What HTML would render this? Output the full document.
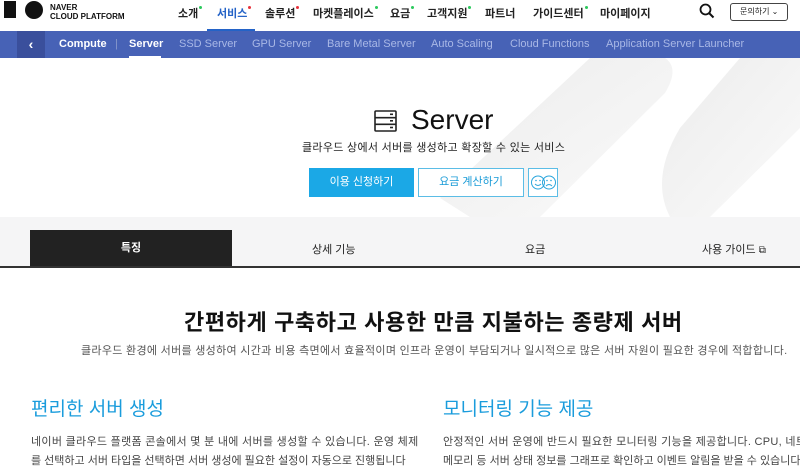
<!DOCTYPE html>
<html><head><meta charset="utf-8"><style>
*{margin:0;padding:0;box-sizing:border-box}
body{width:800px;height:456px;overflow:hidden;background:#fff;font-family:"Liberation Sans","Noto Sans CJK KR",sans-serif;position:relative;color:#222}
.a{position:absolute;white-space:nowrap}
.nav{font-size:11px;font-weight:bold;color:#222;top:5px}
.dot{display:inline-block;width:3px;height:3px;border-radius:50%;background:#2bc95c;vertical-align:top;margin-left:1px;margin-top:1px}
.r{background:#e8313b}
.sub{font-size:11px;color:#a9b8e6;top:38px}
</style></head><body>
<svg class="a" style="left:0;top:58px" width="800" height="159">
<defs><linearGradient id="g" x1="0" y1="0" x2="1" y2="1"><stop offset="0" stop-color="#ececec"/><stop offset="1" stop-color="#fafafa"/></linearGradient></defs>
<path d="M590 0 L665 0 Q680 10 665 35 L540 159 L470 159 L440 140 Z" fill="url(#g)"/>
<path d="M740 0 L800 0 L800 70 L710 159 L670 159 Q650 120 680 70 Z" fill="url(#g)"/>
</svg>
<div class="a" style="left:4px;top:1px;width:12px;height:17px;background:#111"></div>
<div class="a" style="left:25px;top:1px;width:18px;height:18px;border-radius:50%;background:#111"></div>
<div class="a" style="left:50px;top:3px;font-size:8px;font-weight:bold;line-height:9px;color:#111">NAVER<br>CLOUD PLATFORM</div>
<div class="a nav" style="left:178px">소개<span class="dot"></span></div>
<div class="a nav" style="left:217px;color:#2463c7">서비스<span class="dot r"></span></div>
<div class="a nav" style="left:265px">솔루션<span class="dot r"></span></div>
<div class="a nav" style="left:313px">마켓플레이스<span class="dot"></span></div>
<div class="a nav" style="left:390px">요금<span class="dot"></span></div>
<div class="a nav" style="left:427px">고객지원<span class="dot"></span></div>
<div class="a nav" style="left:485px">파트너</div>
<div class="a nav" style="left:533px">가이드센터<span class="dot"></span></div>
<div class="a nav" style="left:600px">마이페이지</div>
<svg class="a" style="left:699px;top:3px" width="16" height="16"><circle cx="6.5" cy="6.5" r="5" fill="none" stroke="#111" stroke-width="1.8"/><line x1="10" y1="10" x2="14.5" y2="14.5" stroke="#111" stroke-width="2"/></svg>
<div class="a" style="left:730px;top:3px;width:58px;height:18px;border:1px solid #444;border-radius:3px;font-size:8px;line-height:16px;padding-left:9px">문의하기 &#8964;</div>
<div class="a" style="left:207px;top:29px;width:48px;height:2px;background:#2463c7"></div>
<div class="a" style="left:0;top:31px;width:800px;height:27px;background:#4762b6"></div>
<div class="a" style="left:17px;top:31px;width:28px;height:27px;background:#3a4f9c;color:#fff;font-size:14px;font-weight:bold;text-align:center;line-height:27px">&#8249;</div>
<div class="a sub" style="left:59px;color:#fff;font-weight:bold">Compute</div>
<div class="a sub" style="left:115px;color:#8899cc">|</div>
<div class="a sub" style="left:129px;color:#fff;font-weight:bold">Server</div>
<div class="a" style="left:129px;top:56px;width:32px;height:2px;background:#fff"></div>
<div class="a sub" style="left:179px">SSD Server</div>
<div class="a sub" style="left:252px">GPU Server</div>
<div class="a sub" style="left:327px">Bare Metal Server</div>
<div class="a sub" style="left:431px">Auto Scaling</div>
<div class="a sub" style="left:510px">Cloud Functions</div>
<div class="a sub" style="left:606px">Application Server Launcher</div>
<svg class="a" style="left:374px;top:110px" width="23" height="22"><g fill="none" stroke="#222" stroke-width="1.6"><rect x="1" y="1" width="21" height="20" rx="1"/><line x1="1" y1="7.7" x2="22" y2="7.7"/><line x1="1" y1="14.3" x2="22" y2="14.3"/></g><g fill="#222"><rect x="16" y="3.5" width="3" height="1.6"/><rect x="16" y="10" width="3" height="1.6"/><rect x="16" y="16.7" width="3" height="1.6"/></g></svg>
<div class="a" style="left:411px;top:104px;font-size:28px;color:#111">Server</div>
<div class="a" style="left:302px;top:139px;font-size:11px;letter-spacing:.3px;color:#222">클라우드 상에서 서버를 생성하고 확장할 수 있는 서비스</div>
<div class="a" style="left:309px;top:168px;width:105px;height:29px;background:#1ba8e6;color:#fff;font-size:11px;text-align:center;line-height:29px">이용 신청하기</div>
<div class="a" style="left:418px;top:168px;width:106px;height:29px;border:1px solid #5bbde6;background:#fff;color:#1a9bd7;font-size:11px;text-align:center;line-height:27px">요금 계산하기</div>
<div class="a" style="left:528px;top:168px;width:30px;height:29px;border:1px solid #5bbde6;background:#fff"></div>
<svg class="a" style="left:530px;top:175px" width="27" height="15"><g fill="none" stroke="#2aa6dc" stroke-width="1"><circle cx="8" cy="7.5" r="6.5"/><circle cx="19" cy="7.5" r="6.5"/><path d="M5 9 Q8 12 11 9"/><path d="M16 11 Q19 8 22 11"/></g><g fill="#2aa6dc"><circle cx="6" cy="5.5" r=".8"/><circle cx="10" cy="5.5" r=".8"/><circle cx="17" cy="5.5" r=".8"/><circle cx="21" cy="5.5" r=".8"/></g></svg>
<div class="a" style="left:0;top:217px;width:800px;height:50px;background:#f5f5f6"></div>
<div class="a" style="left:30px;top:230px;width:202px;height:36px;background:#222;color:#fff;font-size:11px;font-weight:bold;text-align:center;line-height:36px">특징</div>
<div class="a" style="left:312px;top:241px;font-size:11px">상세 기능</div>
<div class="a" style="left:525px;top:241px;font-size:11px">요금</div>
<div class="a" style="left:702px;top:241px;font-size:11px">사용 가이드 <span style="font-size:10px">&#10697;</span></div>
<div class="a" style="left:0;top:266px;width:800px;height:2px;background:#333"></div>
<div class="a" style="left:184px;top:305px;font-size:22px;letter-spacing:.6px;font-weight:bold;color:#111">간편하게 구축하고 사용한 만큼 지불하는 종량제 서버</div>
<div class="a" style="left:81px;top:342px;font-size:11px;letter-spacing:.3px;color:#555">클라우드 환경에 서버를 생성하여 시간과 비용 측면에서 효율적이며 인프라 운영이 부담되거나 일시적으로 많은 서버 자원이 필요한 경우에 적합합니다.</div>
<div class="a" style="left:31px;top:394px;font-size:19px;color:#1a9cdc">편리한 서버 생성</div>
<div class="a" style="left:443px;top:394px;font-size:19px;color:#1a9cdc">모니터링 기능 제공</div>
<div class="a" style="left:31px;top:433px;font-size:11px;letter-spacing:.3px;color:#444">네이버 클라우드 플랫폼 콘솔에서 몇 분 내에 서버를 생성할 수 있습니다. 운영 체제</div>
<div class="a" style="left:443px;top:433px;font-size:11px;letter-spacing:.3px;color:#444">안정적인 서버 운영에 반드시 필요한 모니터링 기능을 제공합니다. CPU, 네트워크</div>
<div class="a" style="left:31px;top:452px;font-size:11px;color:#444">를 선택하고 서버 타입을 선택하면 서버 생성에 필요한 설정이 자동으로 진행됩니다</div>
<div class="a" style="left:443px;top:452px;font-size:11px;color:#444">메모리 등 서버 상태 정보를 그래프로 확인하고 이벤트 알림을 받을 수 있습니다</div>
</body></html>
